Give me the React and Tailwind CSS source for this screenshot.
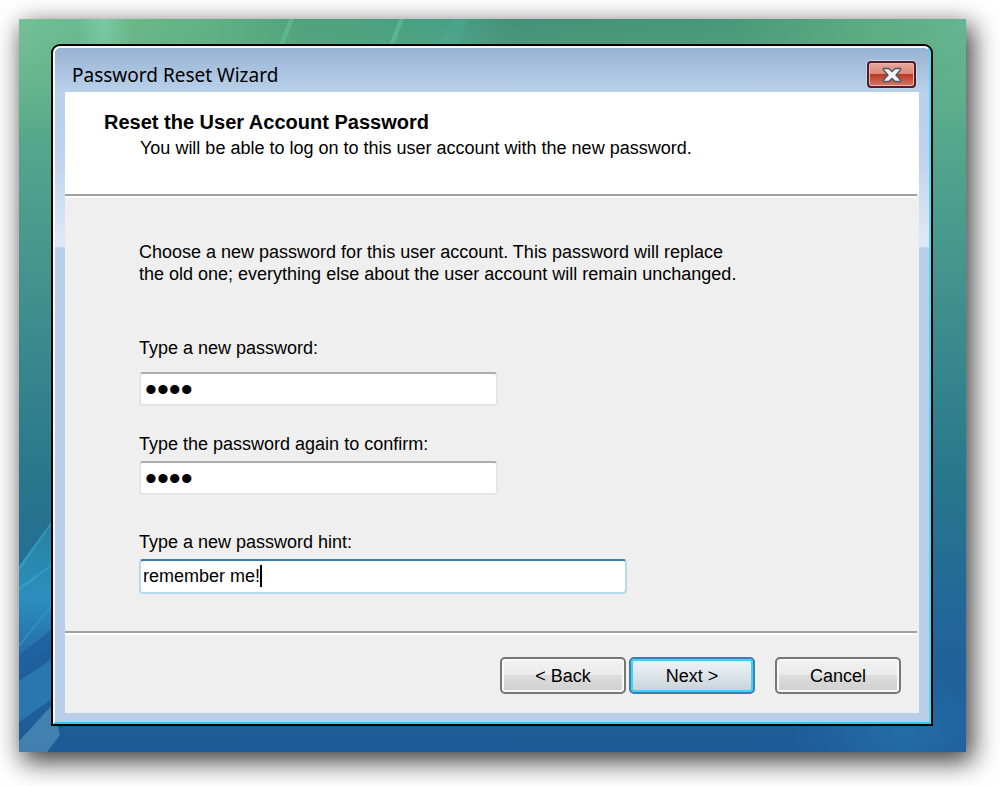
import { useState } from "react";

const Wallpaper = () => (
  <svg
    className="absolute inset-0 w-full h-full"
    viewBox="0 0 947 733"
    preserveAspectRatio="none"
    aria-hidden="true"
  >
    <defs>
      <linearGradient id="sky" x1="0" y1="0" x2="0" y2="1">
        <stop offset="0" stopColor="#64b088" />
        <stop offset="0.13" stopColor="#58ab8b" />
        <stop offset="0.34" stopColor="#45948e" />
        <stop offset="0.62" stopColor="#28788c" />
        <stop offset="0.84" stopColor="#21659a" />
        <stop offset="1" stopColor="#1d5a97" />
      </linearGradient>
      <linearGradient id="top" x1="0" y1="0" x2="1" y2="0">
        <stop offset="0" stopColor="#74c095" />
        <stop offset="0.06" stopColor="#6cb991" />
        <stop offset="0.09" stopColor="#7cc9a5" />
        <stop offset="0.12" stopColor="#6bb786" />
        <stop offset="0.2" stopColor="#62b184" />
        <stop offset="0.3" stopColor="#4fa27c" />
        <stop offset="0.45" stopColor="#46a085" />
        <stop offset="0.52" stopColor="#459079" />
        <stop offset="0.75" stopColor="#489779" />
        <stop offset="0.9" stopColor="#5eab82" />
        <stop offset="1" stopColor="#64b592" />
      </linearGradient>
      <linearGradient id="fade" x1="0" y1="0" x2="0" y2="1">
        <stop offset="0" stopColor="#fff" />
        <stop offset="1" stopColor="#fff" stopOpacity="0" />
      </linearGradient>
      <mask id="topMask">
        <rect width="947" height="120" fill="url(#fade)" />
      </mask>
      <linearGradient id="aurora" x1="0" y1="0" x2="0" y2="1">
        <stop offset="0" stopColor="#2fa0bd" stopOpacity="0.3" />
        <stop offset="0.5" stopColor="#2d93c4" stopOpacity="0.9" />
        <stop offset="1" stopColor="#2568a8" stopOpacity="0.7" />
      </linearGradient>
      <radialGradient id="glow">
        <stop offset="0" stopColor="#2574b0" stopOpacity="0.7" />
        <stop offset="1" stopColor="#2574b0" stopOpacity="0" />
      </radialGradient>
    </defs>
    <rect width="947" height="733" fill="url(#sky)" />
    <rect width="947" height="120" fill="url(#top)" mask="url(#topMask)" />
    <path d="M260 26 L270 0 H275 L265 26Z M370 26 L380 0 H385 L375 26Z" fill="#66c896" opacity="0.5" />
    <path d="M418 26 L434 0 H450 L440 26Z" fill="#50b09a" opacity="0.3" />
    <path d="M0 547 L33 502 V626 L0 655Z" fill="url(#aurora)" />
    <path d="M0 547 L33 502 V505 L0 552Z M0 568 L33 545 V547 L0 572Z M0 625 L33 585 V587 L0 628Z" fill="#3fb4cf" opacity="0.4" />
    <path d="M0 636 L33 610 V640 L0 662Z" fill="#1e5f9f" opacity="0.8" />
    <path d="M0 662 L33 640 V680 L0 703Z" fill="#2c7db5" opacity="0.8" />
    <path d="M0 722 L33 686 L41 716 L28 733 H0Z" fill="#5a98bd" opacity="0.6" />
    <ellipse cx="885" cy="715" rx="110" ry="70" fill="url(#glow)" />
  </svg>
);

const CloseIcon = () => (
  <svg width="20" height="16" viewBox="0 0 20 16" aria-hidden="true">
    <path
      d="M1.5 1.5H6.8L10 4.6L13.2 1.5H18.5V3L14 8L18.5 13V14.5H13.2L10 11.4L6.8 14.5H1.5V13L6 8L1.5 3Z"
      fill="#f4f4f4"
      stroke="#4c5668"
      strokeWidth="1.4"
      strokeLinejoin="round"
    />
  </svg>
);

const Divider = () => (
  <div className="mr-[2px] h-1 border-t-2 border-b-2 border-t-[#a0a0a0] border-b-white" />
);

const PasswordField = ({ id, label, value, onChange, className }) => (
  <div className={`flex flex-col ${className}`}>
    <label htmlFor={id}>{label}</label>
    <input
      id={id}
      type="password"
      value={value}
      onChange={(e) => onChange(e.target.value)}
      className="w-[359px] h-[34px] px-1 bg-white border-2 border-[#e2e6ec] border-t-[#abadb3] rounded-[4px] outline-none text-[34px] leading-[30px]"
    />
  </div>
);

const WizardButton = ({ children, primary }) => (
  <button
    type="button"
    className={
      primary
        ? "w-[126px] h-[37px] rounded-[5px] border-2 border-[#3c7fb1] bg-linear-to-b from-[#f0f4f6] from-0% via-[#dde5ea] via-50% to-[#c6d1d8] to-100% shadow-[inset_0_0_0_2px_#3fd2f8]"
        : "w-[126px] h-[37px] rounded-[5px] border-2 border-[#777777] bg-[linear-gradient(#f2f2f2,#ebebeb_50%,#dddddd_50%,#cfcfcf)] shadow-[inset_0_0_0_2px_#f8f8f8]"
    }
  >
    {children}
  </button>
);

const App = () => {
  const [password, setPassword] = useState("1234");
  const [confirm, setConfirm] = useState("1234");
  const [hint, setHint] = useState("remember me!");

  return (
    <div className="min-h-screen bg-white pt-[19px] pl-[19px] pr-[34px] pb-[34px] font-['Liberation_Sans',sans-serif] text-[18px] leading-[22px] text-black">
      <div className="relative pt-[25px] pb-[26px] pl-8 pr-[33px] shadow-[5px_8px_24px_2px_rgba(0,0,0,0.75)]">
        <Wallpaper />
        <main className="relative rounded-t-[9px] border-2 border-black">
          <div className="rounded-t-[7px] border-2 border-t-[#f4f8fc] border-l-[#f4f8fc] border-r-[#55d8f4] border-b-[#2fc9e6] px-[10px] pb-[9px] bg-[linear-gradient(#98b3d3_0px,#b9d1ea_44px,#bdd1ec_100px,#dfe9f6_198px,#b9cfe9_200px)]">
            <div className="flex items-center justify-between h-11 pt-[9px] pl-[7px] pr-[3px]">
              <h1 className="font-['Noto_Sans',sans-serif] text-[19px]">
                Password Reset Wizard
              </h1>
              <button
                type="button"
                aria-label="Close"
                className="flex items-center justify-center w-[49px] h-[27px] rounded-[4px] border-2 border-[#4f1d28] bg-[linear-gradient(#e9a99d,#d98878_48%,#b93a22_50%,#d4786a)] shadow-[inset_0_0_0_1px_#f0b8ac,0_0_0_1px_#c4daf0]"
              >
                <CloseIcon />
              </button>
            </div>

            <div className="bg-[#efefef]">
              <header className="h-[102px] pt-[19px] pl-[39px] bg-white">
                <h2 className="text-[20px] leading-[22px] font-bold">
                  Reset the User Account Password
                </h2>
                <p className="pt-1 pl-9">
                  You will be able to log on to this user account with the new
                  password.
                </p>
              </header>
              <Divider />

              <form className="pt-[43px] pl-[74px] pb-[37px]">
                <p className="max-w-[640px]">
                  Choose a new password for this user account. This password
                  will replace
                  <br />
                  the old one; everything else about the user account will
                  remain unchanged.
                </p>
                <PasswordField
                  id="password"
                  label="Type a new password:"
                  value={password}
                  onChange={setPassword}
                  className="mt-[52px] gap-[13px]"
                />
                <PasswordField
                  id="confirm"
                  label="Type the password again to confirm:"
                  value={confirm}
                  onChange={setConfirm}
                  className="mt-[27px] gap-[6px]"
                />
                <div className="flex flex-col mt-9 gap-[6px]">
                  <label htmlFor="hint">Type a new password hint:</label>
                  <div className="relative w-[488px]">
                    <input
                      id="hint"
                      type="text"
                      value={hint}
                      onChange={(e) => setHint(e.target.value)}
                      className="w-full h-[35px] px-[2px] bg-white border-2 border-[#b5d9ee] border-t-[#3d7bad] rounded-[4px] outline-none caret-transparent"
                    />
                    <span className="absolute top-[6px] left-[121px] w-[2px] h-[22px] bg-black" />
                  </div>
                </div>
              </form>

              <Divider />
              <footer className="flex justify-end pt-[22px] pr-[18px] pb-[19px]">
                <div className="flex gap-[3px] mr-5">
                  <WizardButton>&lt; Back</WizardButton>
                  <WizardButton primary>Next &gt;</WizardButton>
                </div>
                <WizardButton>Cancel</WizardButton>
              </footer>
            </div>
          </div>
        </main>
      </div>
    </div>
  );
};

export default App;
